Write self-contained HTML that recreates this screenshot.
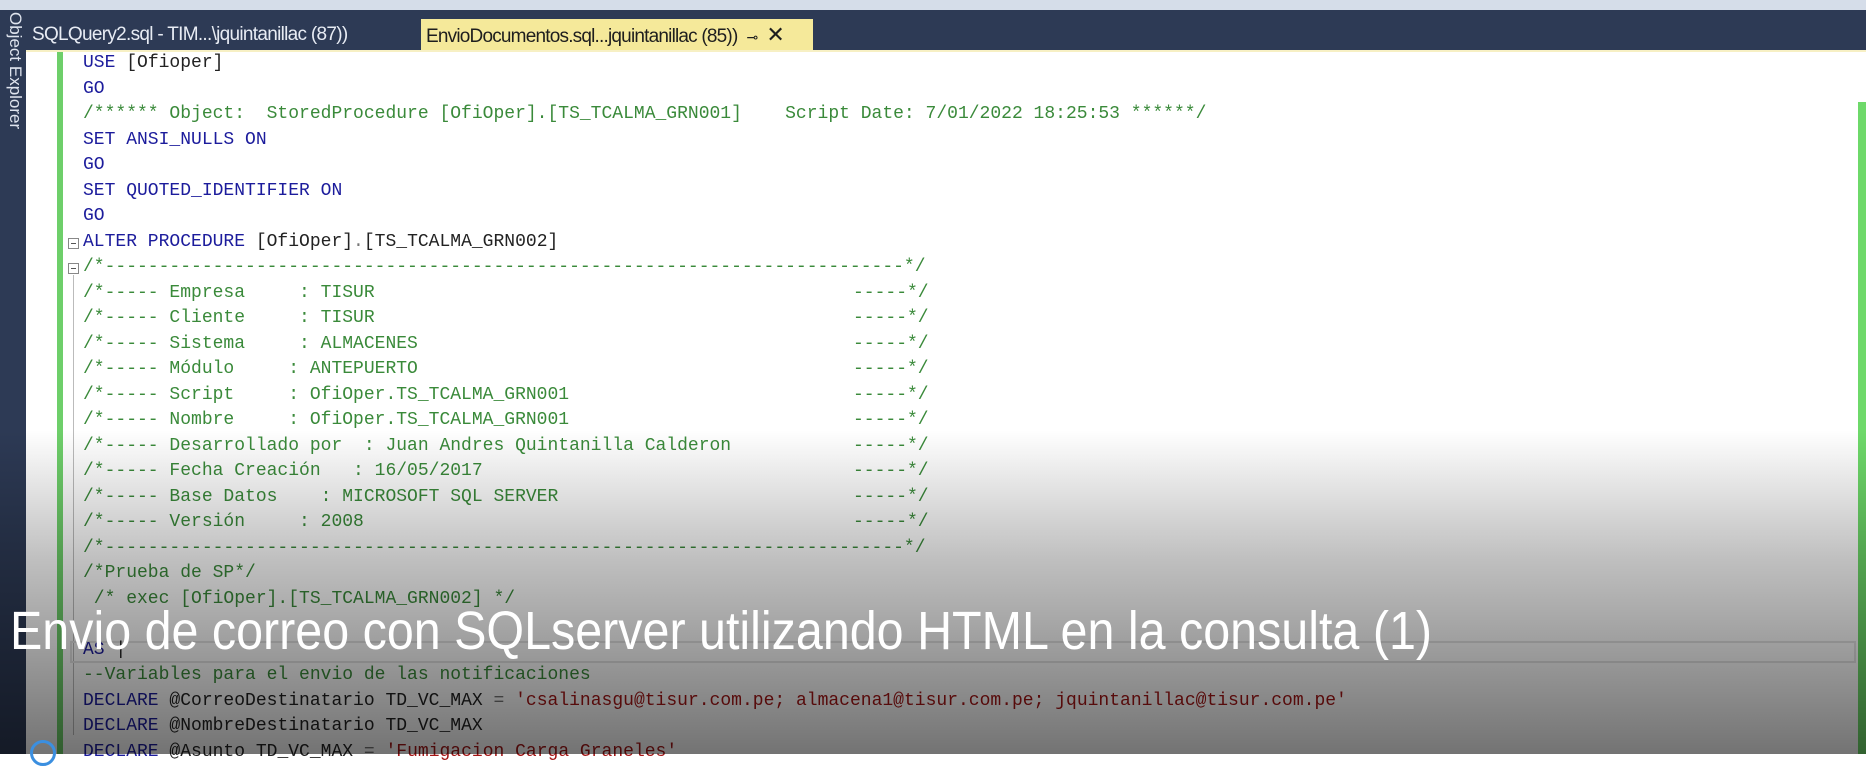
<!DOCTYPE html>
<html><head><meta charset="utf-8"><style>
*{margin:0;padding:0;box-sizing:border-box}
body{width:1866px;height:754px;overflow:hidden;position:relative;background:#fff;font-family:"Liberation Mono",monospace}
.top{position:absolute;left:0;top:0;width:1866px;height:10px;background:#d5dde9}
.tabs{position:absolute;left:0;top:10px;width:1866px;height:40px;background:#2d3a55}
.side{position:absolute;left:0;top:10px;width:26px;height:744px;background:#2d3a55}
.t1{position:absolute;left:32px;top:18px;height:33px;font:19px "Liberation Sans",sans-serif;color:#e8ecf4;line-height:33px;letter-spacing:-0.7px}
.t2{position:absolute;left:421px;top:19px;width:392px;height:31px;background:#f5e99a;font:19px "Liberation Sans",sans-serif;color:#1e1e1e;line-height:32px;padding-left:5px;letter-spacing:-0.8px}
.ed{position:absolute;left:26px;top:50px;width:1840px;height:704px;background:#fff;border-top:2px solid #f7f0c4}
.gbar{position:absolute;left:57px;top:52px;width:6px;height:702px;background:#6ecf6a}
.sb{position:absolute;left:1858px;top:102px;width:8px;height:652px;background:#6ed96a}
.ln{position:absolute;left:83px;font-size:18px;line-height:25.5px;white-space:pre;color:#1c1c9c}
.rt{position:absolute;left:853px;font-size:18px;line-height:25.5px;white-space:pre;color:#3a8a3a}
.c{color:#3a8a3a}.r{color:#a31515}.g{color:#777}.k{color:#1c1c9c}.d{color:#222}
.fold{position:absolute;left:68px;width:11px;height:11px;border:1px solid #888;background:#fff}
.fold:after{content:"";position:absolute;left:2px;top:4px;width:5px;height:1px;background:#555}
.vl{position:absolute;left:73px;top:275px;width:1px;height:460px;background:#bbb}
.cur{position:absolute;left:70px;top:641px;width:1786px;height:22px;border:2px solid #e4e4e4}
.ov{position:absolute;left:0;top:430px;width:1866px;height:324px;background:linear-gradient(to bottom,rgba(0,0,0,0) 0%,rgba(0,0,0,0.25) 40%,rgba(0,0,0,0.55) 100%)}
.ex{position:absolute;left:3px;top:12px;width:22px;height:140px;writing-mode:vertical-rl;font:17px "Liberation Sans",sans-serif;color:#dfe4ee}
</style></head><body>
<div class="top"></div>
<div class="tabs"></div>
<div class="side"></div>
<div class="ex">Object Explorer</div>
<div class="t1">SQLQuery2.sql - TIM...\jquintanillac (87))</div>
<div class="t2">EnvioDocumentos.sql...jquintanillac (85)) &nbsp;<span style="font-size:14px">⊸</span>&nbsp; <span style="font-size:22px">✕</span></div>
<div class="ed"></div>
<div class="gbar"></div>
<div class="sb"></div>
<div class="vl"></div>
<div class="cur"></div>
<div class="fold" style="top:238px"></div>
<div class="fold" style="top:263px"></div>

<div class="ln" style="top:51px">USE <span class="d">[Ofioper]</span></div>
<div class="ln" style="top:76.5px">GO</div>
<div class="ln c" style="top:102px">/****** Object:  StoredProcedure [OfiOper].[TS_TCALMA_GRN001]    Script Date: 7/01/2022 18:25:53 ******/</div>
<div class="ln" style="top:127.5px">SET ANSI_NULLS ON</div>
<div class="ln" style="top:153px">GO</div>
<div class="ln" style="top:178.5px">SET QUOTED_IDENTIFIER ON</div>
<div class="ln" style="top:204px">GO</div>
<div class="ln" style="top:229.5px">ALTER PROCEDURE <span class="d">[OfiOper]</span><span class="g">.</span><span class="d">[TS_TCALMA_GRN002]</span></div>
<div class="ln c" style="top:255px">/*--------------------------------------------------------------------------*/</div>
<div class="ln c" style="top:280.5px">/*----- Empresa     : TISUR</div>
<div class="ln c" style="top:306px">/*----- Cliente     : TISUR</div>
<div class="ln c" style="top:331.5px">/*----- Sistema     : ALMACENES</div>
<div class="ln c" style="top:357px">/*----- Módulo     : ANTEPUERTO</div>
<div class="ln c" style="top:382.5px">/*----- Script     : OfiOper.TS_TCALMA_GRN001</div>
<div class="ln c" style="top:408px">/*----- Nombre     : OfiOper.TS_TCALMA_GRN001</div>
<div class="ln c" style="top:433.5px">/*----- Desarrollado por  : Juan Andres Quintanilla Calderon</div>
<div class="ln c" style="top:459px">/*----- Fecha Creación   : 16/05/2017</div>
<div class="ln c" style="top:484.5px">/*----- Base Datos    : MICROSOFT SQL SERVER</div>
<div class="ln c" style="top:510px">/*----- Versión     : 2008</div>
<div class="rt" style="top:280.5px">-----*/</div>
<div class="rt" style="top:306px">-----*/</div>
<div class="rt" style="top:331.5px">-----*/</div>
<div class="rt" style="top:357px">-----*/</div>
<div class="rt" style="top:382.5px">-----*/</div>
<div class="rt" style="top:408px">-----*/</div>
<div class="rt" style="top:433.5px">-----*/</div>
<div class="rt" style="top:459px">-----*/</div>
<div class="rt" style="top:484.5px">-----*/</div>
<div class="rt" style="top:510px">-----*/</div>
<div class="ln c" style="top:535.5px">/*--------------------------------------------------------------------------*/</div>
<div class="ln c" style="top:561px">/*Prueba de SP*/</div>
<div class="ln c" style="top:586.5px"> /* exec [OfiOper].[TS_TCALMA_GRN002] */</div>
<div class="ln" style="top:637.5px">AS <span class="d">|</span></div>
<div class="ln c" style="top:663px">--Variables para el envio de las notificaciones</div>
<div class="ln" style="top:688.5px">DECLARE <span class="d">@CorreoDestinatario TD_VC_MAX</span> <span class="g">=</span> <span class="r">'csalinasgu@tisur.com.pe; almacena1@tisur.com.pe; jquintanillac@tisur.com.pe'</span></div>
<div class="ln" style="top:714px">DECLARE <span class="d">@NombreDestinatario TD_VC_MAX</span></div>
<div class="ln" style="top:739.5px">DECLARE <span class="d">@Asunto TD_VC_MAX</span> <span class="g">=</span> <span class="r">'Fumigacion Carga Graneles'</span></div>

<div class="ov"></div>
<div style="position:absolute;left:30px;top:740px;width:26px;height:26px;border:3px solid #3b8fe0;border-radius:50%"></div>
<svg style="position:absolute;left:0;top:590px" width="1866" height="80">
<text x="10" y="59" font-family="Liberation Sans, sans-serif" font-size="54" fill="#fff" textLength="1422" lengthAdjust="spacingAndGlyphs">Envio de correo con SQLserver utilizando HTML en la consulta (1)</text>
</svg>
</body></html>
